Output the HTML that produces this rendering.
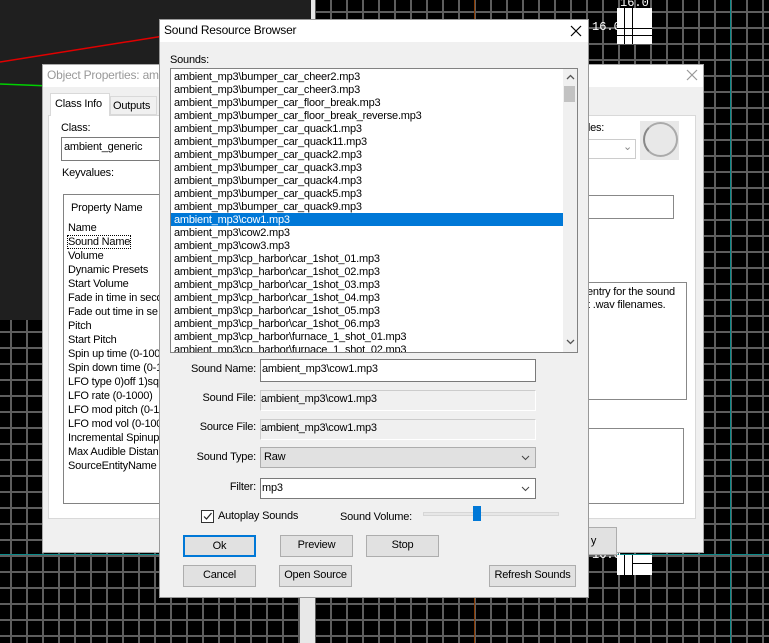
<!DOCTYPE html>
<html><head><meta charset="utf-8"><style>
*{margin:0;padding:0;box-sizing:border-box}
body{width:769px;height:643px;overflow:hidden;position:relative;background:#000;font-family:"Liberation Sans",sans-serif;font-size:11px;letter-spacing:-0.2px;color:#000}
.a{position:absolute}
.grid{left:0;top:0;width:769px;height:643px;background-color:#000;
background-image:linear-gradient(to right,#5e5e5e 0,#5e5e5e 2px,transparent 2px),linear-gradient(to bottom,#5e5e5e 0,#5e5e5e 2px,transparent 2px);
background-size:16px 16px;background-position:10px 11px}
.t{white-space:nowrap;line-height:13px}
.box{background:#fff;border:1px solid #7a7a7a}
.btn{background:#e1e1e1;border:1px solid #adadad;text-align:center;line-height:19px;white-space:nowrap}
.r{text-align:right}
.m{font-family:'Liberation Mono',monospace;font-size:12px;letter-spacing:0;color:#fff}
</style></head><body>
<div class="a grid"></div>
<div class="a" style="left:730px;top:0;width:1px;height:643px;background:#0a8a8a"></div>
<div class="a" style="left:0;top:554px;width:769px;height:1px;background:#0a8a8a"></div>
<div class="a" style="left:474px;top:0;width:1px;height:643px;background:#8a3a00"></div>
<div class="a" style="left:0;top:0;width:311px;height:320px;background:#1f1f1f"></div>
<div class="a" style="left:311px;top:0;width:4px;height:320px;background:#e8e8e8"></div>
<div class="a" style="left:300px;top:597px;width:15px;height:46px;background:#e8e8e8"></div>
<svg class="a" style="left:0;top:0" width="320" height="320"><line x1="0" y1="62" x2="170" y2="35" stroke="#e00000" stroke-width="1.5"/><line x1="0" y1="84" x2="50" y2="86" stroke="#00d000" stroke-width="1.5"/></svg>
<div class="a t m" style="left:620px;top:-3px">16.0</div>
<div class="a t m" style="left:592px;top:21px">16.0</div>
<div class="a" style="left:617px;top:8px;width:35px;height:36px;background:#fff"></div>
<div class="a" style="left:624px;top:8px;width:1px;height:36px;background:#000"></div>
<div class="a" style="left:632px;top:8px;width:1px;height:36px;background:#000"></div>
<div class="a" style="left:617px;top:28px;width:35px;height:1px;background:#000"></div>
<div class="a" style="left:617px;top:35px;width:35px;height:1px;background:#000"></div>
<div class="a" style="left:617px;top:555px;width:35px;height:20px;background:#fff"></div>
<div class="a" style="left:624px;top:555px;width:1px;height:20px;background:#000"></div>
<div class="a" style="left:632px;top:555px;width:1px;height:20px;background:#000"></div>
<div class="a" style="left:632px;top:563px;width:20px;height:1px;background:#000"></div>
<div class="a t m" style="left:592px;top:549px">16.0</div>

<!-- Object Properties -->
<div class="a" style="left:42px;top:64px;width:662px;height:489px;background:#f0f0f0;border:1px solid #aaa"></div>
<div class="a" style="left:43px;top:65px;width:660px;height:22px;background:#fff"></div>
<div class="a t" style="left:47px;top:69px;color:#999;font-size:12px">Object Properties: am</div>
<svg class="a" style="left:686px;top:69px" width="12" height="12"><path d="M1 1L11 11M11 1L1 11" stroke="#999" stroke-width="1.2"/></svg>
<div class="a" style="left:48px;top:115px;width:648px;height:404px;background:#fff;border:1px solid #d9d9d9"></div>
<div class="a" style="left:50px;top:93px;width:60px;height:23px;background:#fff;border:1px solid #d9d9d9;border-bottom:none"></div>
<div class="a t" style="left:55px;top:98px">Class Info</div>
<div class="a" style="left:110px;top:96px;width:47px;height:19px;background:#f0f0f0;border:1px solid #d9d9d9"></div>
<div class="a t" style="left:113px;top:100px">Outputs</div>
<div class="a t" style="left:61px;top:122px">Class:</div>
<div class="a box" style="left:61px;top:137px;width:110px;height:24px"></div>
<div class="a t" style="left:64px;top:141px">ambient_generic</div>
<div class="a t" style="left:62px;top:167px">Keyvalues:</div>
<div class="a box" style="left:63px;top:194px;width:110px;height:310px;border-color:#828282"></div>
<div class="a t" style="left:71px;top:202px">Property Name</div>
<div class="a t" style="left:68px;top:221px;line-height:14px">Name<br><span style="outline:1px dotted #000">Sound Name</span><br>Volume<br>Dynamic Presets<br>Start Volume<br>Fade in time in seco<br>Fade out time in se<br>Pitch<br>Start Pitch<br>Spin up time (0-100<br>Spin down time (0-1<br>LFO type 0)off 1)sq<br>LFO rate (0-1000)<br>LFO mod pitch (0-1<br>LFO mod vol (0-100<br>Incremental Spinup<br>Max Audible Distan<br>SourceEntityName</div>
<div class="a t" style="left:576px;top:122px">ngles:</div>
<div class="a" style="left:570px;top:139px;width:66px;height:20px;background:#fff;border:1px solid #ccc"></div>
<div class="a t" style="left:623px;top:141px;color:#888">⌄</div>
<div class="a" style="left:640px;top:121px;width:39px;height:39px;background:#e8e8e8"></div>
<div class="a" style="left:643px;top:122px;width:35px;height:35px;border:2px solid #aaa;border-radius:50%;border-left-color:#888"></div>
<div class="a box" style="left:570px;top:195px;width:104px;height:24px;border-color:#888"></div>
<div class="a box" style="left:570px;top:282px;width:117px;height:118px;border-color:#888"></div>
<div class="a t" style="left:587px;top:286px">entry for the sound<br>t .wav filenames.</div>
<div class="a box" style="left:570px;top:428px;width:114px;height:76px;border-color:#888"></div>
<div class="a btn" style="left:570px;top:527px;width:47px;height:28px;line-height:26px">y</div>

<!-- Sound Resource Browser -->
<div class="a" style="left:159px;top:19px;width:430px;height:579px;background:#f0f0f0;border:1px solid #999"></div>
<div class="a" style="left:160px;top:20px;width:428px;height:22px;background:#fff"></div>
<div class="a t" style="left:164px;top:24px;font-size:12px">Sound Resource Browser</div>
<svg class="a" style="left:570px;top:25px" width="12" height="12"><path d="M1 1L11 11M11 1L1 11" stroke="#000" stroke-width="1.2"/></svg>
<div class="a t" style="left:170px;top:54px">Sounds:</div>
<div class="a box" style="left:170px;top:68px;width:408px;height:285px;border-color:#828282;overflow:hidden">
<div style="position:absolute;left:0;top:144px;width:392px;height:13px;background:#0078d7"></div>
<div class="t" style="position:absolute;left:3px;top:2px;line-height:13px">ambient_mp3\bumper_car_cheer2.mp3<br>ambient_mp3\bumper_car_cheer3.mp3<br>ambient_mp3\bumper_car_floor_break.mp3<br>ambient_mp3\bumper_car_floor_break_reverse.mp3<br>ambient_mp3\bumper_car_quack1.mp3<br>ambient_mp3\bumper_car_quack11.mp3<br>ambient_mp3\bumper_car_quack2.mp3<br>ambient_mp3\bumper_car_quack3.mp3<br>ambient_mp3\bumper_car_quack4.mp3<br>ambient_mp3\bumper_car_quack5.mp3<br>ambient_mp3\bumper_car_quack9.mp3<br><span style="color:#fff">ambient_mp3\cow1.mp3</span><br>ambient_mp3\cow2.mp3<br>ambient_mp3\cow3.mp3<br>ambient_mp3\cp_harbor\car_1shot_01.mp3<br>ambient_mp3\cp_harbor\car_1shot_02.mp3<br>ambient_mp3\cp_harbor\car_1shot_03.mp3<br>ambient_mp3\cp_harbor\car_1shot_04.mp3<br>ambient_mp3\cp_harbor\car_1shot_05.mp3<br>ambient_mp3\cp_harbor\car_1shot_06.mp3<br>ambient_mp3\cp_harbor\furnace_1_shot_01.mp3<br>ambient_mp3\cp_harbor\furnace_1_shot_02.mp3</div>
<div style="position:absolute;left:392px;top:0;width:15px;height:283px;background:#f0f0f0"></div>
<div style="position:absolute;left:393px;top:17px;width:11px;height:16px;background:#c2c2c2"></div>
<svg style="position:absolute;left:395px;top:5px" width="9" height="6"><path d="M1 5L4.5 1.5L8 5" stroke="#555" fill="none" stroke-width="1.3"/></svg>
<svg style="position:absolute;left:395px;top:270px" width="9" height="6"><path d="M1 1L4.5 4.5L8 1" stroke="#555" fill="none" stroke-width="1.3"/></svg>
</div>
<div class="a t r" style="left:160px;top:363px;width:96px">Sound Name:</div>
<div class="a box" style="left:260px;top:359px;width:276px;height:23px"></div>
<div class="a t" style="left:262px;top:363px">ambient_mp3\cow1.mp3</div>
<div class="a t r" style="left:160px;top:392px;width:96px">Sound File:</div>
<div class="a" style="left:260px;top:390px;width:276px;height:21px;border:1px solid #ccc;border-right-color:#fff;border-bottom-color:#fff"></div>
<div class="a t" style="left:261px;top:393px">ambient_mp3\cow1.mp3</div>
<div class="a t r" style="left:160px;top:421px;width:96px">Source File:</div>
<div class="a" style="left:260px;top:419px;width:276px;height:21px;border:1px solid #ccc;border-right-color:#fff;border-bottom-color:#fff"></div>
<div class="a t" style="left:261px;top:422px">ambient_mp3\cow1.mp3</div>
<div class="a t r" style="left:160px;top:451px;width:96px">Sound Type:</div>
<div class="a" style="left:260px;top:447px;width:276px;height:21px;background:#e1e1e1;border:1px solid #adadad"></div>
<div class="a t" style="left:264px;top:451px">Raw</div>
<svg class="a" style="left:521px;top:455px" width="9" height="6"><path d="M1 1L4.5 4.5L8 1" stroke="#444" fill="none"/></svg>
<div class="a t r" style="left:160px;top:481px;width:96px">Filter:</div>
<div class="a box" style="left:260px;top:478px;width:276px;height:21px"></div>
<div class="a t" style="left:262px;top:482px">mp3</div>
<svg class="a" style="left:521px;top:486px" width="9" height="6"><path d="M1 1L4.5 4.5L8 1" stroke="#444" fill="none"/></svg>
<div class="a" style="left:201px;top:510px;width:13px;height:13px;background:#fff;border:1px solid #333"></div>
<svg class="a" style="left:202px;top:511px" width="11" height="11"><path d="M2 5.5L4.5 8L9.5 2" stroke="#222" fill="none" stroke-width="1.2"/></svg>
<div class="a t" style="left:218px;top:510px">Autoplay Sounds</div>
<div class="a t" style="left:340px;top:511px">Sound Volume:</div>
<div class="a" style="left:423px;top:512px;width:136px;height:4px;background:#e7e7e7;border:1px solid #d6d6d6"></div>
<div class="a" style="left:473px;top:506px;width:8px;height:15px;background:#0078d7"></div>
<div class="a btn" style="left:183px;top:535px;width:73px;height:22px;border:2px solid #0078d7;line-height:18px">Ok</div>
<div class="a btn" style="left:280px;top:535px;width:73px;height:22px">Preview</div>
<div class="a btn" style="left:366px;top:535px;width:73px;height:22px">Stop</div>
<div class="a btn" style="left:183px;top:565px;width:73px;height:22px">Cancel</div>
<div class="a btn" style="left:279px;top:565px;width:73px;height:22px">Open Source</div>
<div class="a btn" style="left:489px;top:565px;width:87px;height:22px">Refresh Sounds</div>
</body></html>
